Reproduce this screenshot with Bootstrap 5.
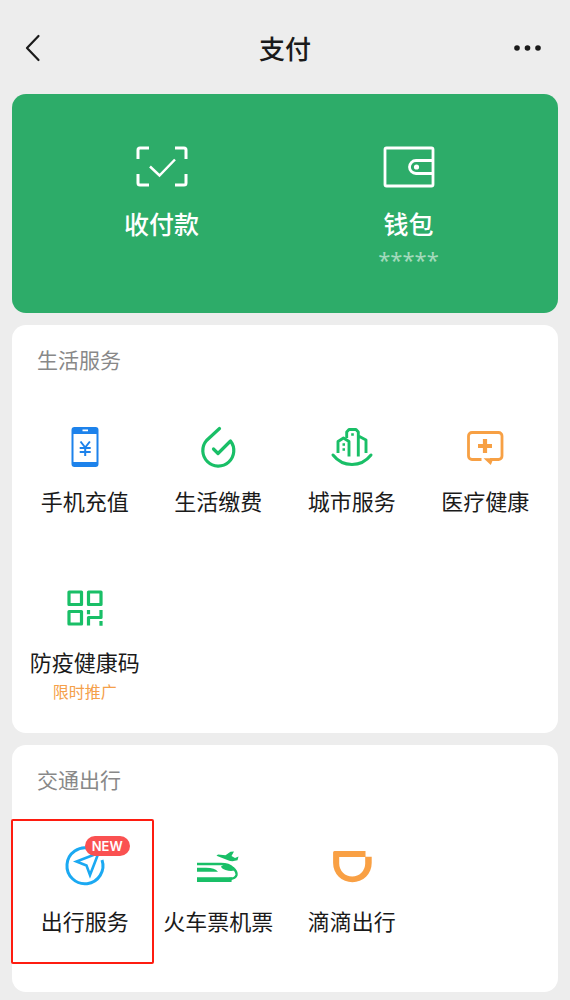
<!DOCTYPE html>
<html lang="zh-CN">
<head>
<meta charset="utf-8">
<meta name="viewport" content="width=device-width, initial-scale=1">
<title>支付</title>
<link rel="stylesheet" href="https://cdn.jsdelivr.net/npm/bootstrap@5.3.0/dist/css/bootstrap.min.css">
<style>
  body { background: #ededed; color: #1a1a1a; font-family: "Noto Sans CJK SC", sans-serif; }
  svg { display: block; fill: none; flex: none; overflow: visible; }
  .topbar { height: 94px; padding: 2px 26px 0; }
  .topbar h1 { font-size: 26px; line-height: 36px; font-weight: 500; }
  .topbar button { color: #1a1a1a; }
  .pay-stack { gap: 12px; padding: 0 12px 8px; }
  .panel { border: 0; border-radius: 14px; }
  .pay-hero { background: #2dac69; padding: 52px 26px 40px; }
  .pay-hero a { color: #fff; font-size: 25px; line-height: 36px; font-weight: 500; }
  .pay-hero .hero-label { margin-top: 17px; }
  .pay-hero .masked { margin-top: 5px; color: #a3dabc; font-family: "Noto Sans", sans-serif; font-size: 22px; line-height: 27px; font-weight: 400; }
  .services { padding: 18px 6px 0; }
  .services h2 { font-size: 21px; line-height: 32px; margin: 0 19px 48px; color: #888; font-weight: 400; }
  .service-grid { row-gap: 12px; }
  .service { color: #1a1a1a; min-height: 149px; font-size: 22px; line-height: 30px; white-space: nowrap; }
  .service .service-name { margin-top: 14px; }
  .service .promo { color: #f5a04a; font-size: 16px; line-height: 30px; }
  .new-tag { left: 24px; top: -7px; width: 45px; height: 20px; background: #fa5151; color: #fff; font: 600 13px/20px "Inter", sans-serif; text-align: center; }
  .highlight { inset: -24px -2px 28px -7px; border: 2px solid #fe1c10; border-radius: 2px; pointer-events: none; z-index: 2; }
</style>
</head>
<body>
<header class="topbar d-flex align-items-center justify-content-between">
  <button type="button" class="btn p-0 border-0" aria-label="返回">
    <svg width="32" height="28" viewBox="2 0 32 28" stroke="currentColor" stroke-width="2.2" stroke-linecap="round" stroke-linejoin="round"><path d="M14.500 2 3 14l11.500 12"/></svg>
  </button>
  <h1 class="m-0">支付</h1>
  <button type="button" class="btn p-0 border-0" aria-label="更多">
    <svg width="32" height="28" viewBox="2 0 32 28"><g fill="currentColor"><circle cx="7" cy="14" r="2.800"/><circle cx="17.500" cy="14" r="2.800"/><circle cx="28" cy="14" r="2.800"/></g></svg>
  </button>
</header>
<main class="pay-stack d-flex flex-column">
  <section class="card panel pay-hero">
    <div class="row g-0 text-center">
      <a href="#" class="col-6 d-flex flex-column align-items-center text-decoration-none">
        <svg width="52" height="42" viewBox="0 0 52 42" stroke="#fff" stroke-width="3"><path d="M2 13V4Q2 2 4 2h9M39 2h9q2 0 2 2v9M50 28v9q0 2-2 2h-9M13 39H4q-2 0-2-2v-9"/><path d="M14 20.500l9.500 9L39 13.500" stroke-width="2.500"/></svg>
        <span class="hero-label">收付款</span>
      </a>
      <a href="#" class="col-6 d-flex flex-column align-items-center text-decoration-none">
        <svg width="52" height="42" viewBox="0 0 52 42" stroke="#fff" stroke-width="2.800"><rect x="2" y="2" width="48" height="38" rx="1.500"/><path d="M50 14.500H33a6.500 6.500 0 0 0 0 13h17"/><circle cx="33.500" cy="21" r="2.600" fill="#fff" stroke="none"/></svg>
        <span class="hero-label">钱包</span>
        <span class="masked">*****</span>
      </a>
    </div>
  </section>

  <section class="card panel services">
    <h2>生活服务</h2>
    <div class="row g-0 service-grid">
      <a href="#" class="col-3 service d-flex flex-column align-items-center text-decoration-none">
        <svg width="48" height="48" viewBox="0 0 48 48"><path fill="#1d82eb" fill-rule="evenodd" d="M13.500 4h21a3 3 0 0 1 3 3v34a3 3 0 0 1-3 3h-21a3 3 0 0 1-3-3V7a3 3 0 0 1 3-3ZM12.500 11v28h23V11ZM21.500 6.500v1.800h5.500V6.500Z"/><path stroke="#1d82eb" stroke-width="2" d="M19.500 18.500l4.700 6 4.700-6M24.200 24.500V33M18.700 25h11M18.700 29h11"/></svg>
        <span class="service-name">手机充值</span>
      </a>
      <a href="#" class="col-3 service d-flex flex-column align-items-center text-decoration-none">
        <svg width="48" height="48" viewBox="0 0 48 48" stroke="#19bf67" stroke-width="3.200" stroke-linecap="round" stroke-linejoin="round"><path d="M25.500 5.500 12.500 17.500A15.500 15.500 0 1 0 36.500 18L24 30.500l-4.500-4.500"/></svg>
        <span class="service-name">生活缴费</span>
      </a>
      <a href="#" class="col-3 service d-flex flex-column align-items-center text-decoration-none">
        <svg width="48" height="48" viewBox="0 0 48 48" stroke="#19bf67" stroke-width="2.900" stroke-linejoin="round"><path d="M10 30V18.500l5.500-3.500 5.500 3.500V33.500"/><path d="M18.700 15V9l2.300-2.500h7l2.300 2.500v24.500M30.500 13l7.500 4v13"/><path stroke-width="3" stroke-linecap="round" d="M5 32q7.500 9.500 19 9.500T43 32"/><path stroke-width="2.600" d="M23.200 11.500h2.600M14.500 21.500h2.500M14.500 26.500h2.500"/></svg>
        <span class="service-name">城市服务</span>
      </a>
      <a href="#" class="col-3 service d-flex flex-column align-items-center text-decoration-none">
        <svg width="48" height="48" viewBox="0 0 48 48" stroke="#f7a044" stroke-width="2.800"><path d="M20.500 36.500H11A3.500 3.500 0 0 1 7.500 33V13A3.500 3.500 0 0 1 11 9.500h26.500A3.500 3.500 0 0 1 41 13v20a3.500 3.500 0 0 1-3.500 3.500H29"/><path stroke-width="4.200" d="M17 23h14M24 16v14"/><path fill="#f7a044" stroke="none" d="M22.500 35.200H32.500L29.800 42Z"/></svg>
        <span class="service-name">医疗健康</span>
      </a>
      <a href="#" class="col-3 service d-flex flex-column align-items-center text-decoration-none">
        <svg width="48" height="48" viewBox="0 0 48 48" stroke="#19bf67" stroke-width="3.200" stroke-linejoin="round"><path d="M8 8h12.500v12.500H8ZM27.500 8h12.500v12.500h-12.500ZM8 27.500h12.500v12.500H8Z"/><path d="M40 26v7.500H27.500v8M27.500 26v4.200M40 37v4.800"/></svg>
        <span class="service-name">防疫健康码</span>
        <span class="promo">限时推广</span>
      </a>
    </div>
  </section>

  <section class="card panel services">
    <h2>交通出行</h2>
    <div class="row g-0 service-grid">
      <a href="#" class="col-3 service position-relative d-flex flex-column align-items-center text-decoration-none">
        <span class="position-relative">
          <svg width="48" height="48" viewBox="0 0 48 48" stroke="#1ba9f2" stroke-width="3"><path d="M29 5.500A18 18 0 1 0 41 17"/><path stroke-width="2.600" d="M37.500 10 15.500 18.500 25.500 22.500 29 32Z"/></svg>
          <span class="new-tag position-absolute rounded-pill">NEW</span>
        </span>
        <span class="service-name">出行服务</span>
        <span class="highlight position-absolute"></span>
      </a>
      <a href="#" class="col-3 service d-flex flex-column align-items-center text-decoration-none">
        <svg width="48" height="48" viewBox="0 0 48 48"><path stroke="#19bf67" stroke-width="2.400" d="M3 21h24q8 0 12 4 4 3.500 3.500 7-.8 3.800-7.500 4"/><path fill="#19bf67" d="M3 34.300h35L37.500 39H3ZM3 24.800h9q9 .2 12 3.900H3ZM27 23.500l4-2.500q6 1.500 9.500 6.500-4 1.200-9-.5-4-1.500-4.500-3.500Z"/><path fill="#19bf67" d="M22.500 12.800 24 11.400l7.500.800L36.500 8.800 40 8.500 37.500 13l3.500 2 3.500-1.500L43.500 17.300Q38 19 34 17.200Z"/></svg>
        <span class="service-name">火车票机票</span>
      </a>
      <a href="#" class="col-3 service d-flex flex-column align-items-center text-decoration-none">
        <svg width="48" height="48" viewBox="0 0 48 48"><path fill="#f9a044" fill-rule="evenodd" d="M6.500 8H37.500v5.700h6.200V20a19.300 19.300 0 0 1-38.600 0V9.500Q5 8 6.500 8ZM11.200 14V20.500a13 13 0 0 0 26 0v-6.500Z"/></svg>
        <span class="service-name">滴滴出行</span>
      </a>
    </div>
  </section>
</main>
<script src="https://cdn.jsdelivr.net/npm/bootstrap@5.3.0/dist/js/bootstrap.bundle.min.js"></script>
</body>
</html>
